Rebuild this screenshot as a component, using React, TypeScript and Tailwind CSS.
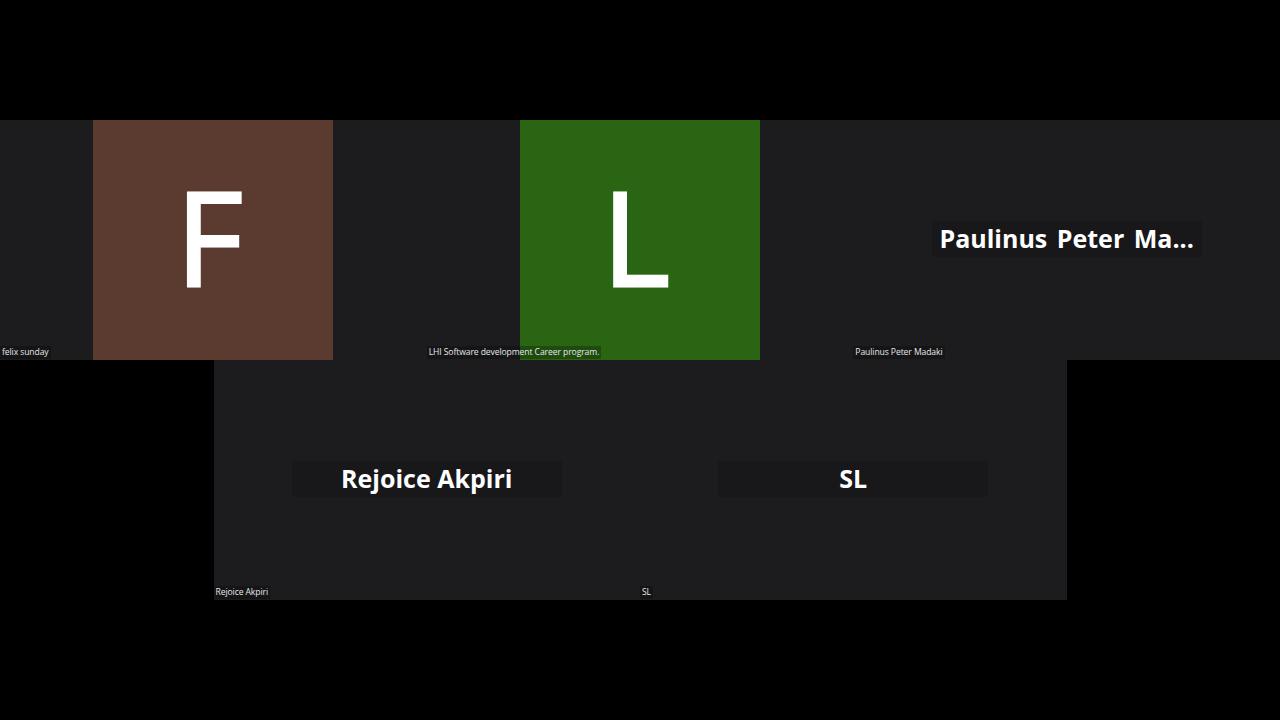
import React from 'react';

type Tile = {
  label: string;
  avatar?: { letter: string; color: string };
  name?: string;
  wide?: boolean;
};

const topRow: Tile[] = [
  { label: 'felix sunday', avatar: { letter: 'F', color: 'bg-[#5b3a2f]' } },
  { label: 'LHI Software development Career program.', avatar: { letter: 'L', color: 'bg-[#2a6514]' } },
  { label: 'Paulinus Peter Madaki', name: 'Paulinus Peter Ma...', wide: true },
];

const bottomRow: Tile[] = [
  { label: 'Rejoice Akpiri', name: 'Rejoice Akpiri' },
  { label: 'SL', name: 'SL' },
];

function VideoTile({ tile }: { tile: Tile }) {
  return (
    <div className="relative h-[240px] bg-[#1c1c1e] flex items-center justify-center overflow-hidden">
      {tile.avatar && (
        <div className={`w-[240px] h-[240px] ${tile.avatar.color} flex items-center justify-center`}>
          <span className="text-white text-[130px] leading-none font-normal [-webkit-text-stroke:3px_white] font-['Open_Sans',sans-serif] -mt-[8px] mr-[8px]">
            {tile.avatar.letter}
          </span>
        </div>
      )}
      {tile.name && (
        <div className="min-w-[270px] h-[36px] px-[6px] -mt-[3px] bg-[#18181a] flex items-center justify-center">
          <span className={`text-white text-[25px] font-bold leading-none font-['Open_Sans',sans-serif] ${tile.wide ? '[word-spacing:3px]' : ''}`}>
            {tile.name}
          </span>
        </div>
      )}
      <div className="absolute left-0 bottom-[1px] px-[2px] bg-black/25 text-[8.6px] tracking-[-0.1px] leading-[13px] text-gray-200 font-['Open_Sans',sans-serif]">
        {tile.label}
      </div>
    </div>
  );
}

export default function App() {
  return (
    <div className="w-full h-[720px] bg-black pt-[120px]">
      <div className="grid grid-cols-3">
        {topRow.map((t) => (
          <VideoTile key={t.label} tile={t} />
        ))}
      </div>
      <div className="w-[853px] mx-auto grid grid-cols-2">
        {bottomRow.map((t) => (
          <VideoTile key={t.label} tile={t} />
        ))}
      </div>
    </div>
  );
}
